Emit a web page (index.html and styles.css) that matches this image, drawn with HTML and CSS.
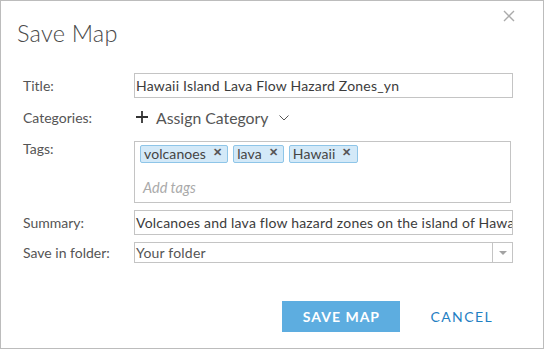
FILE: index.html
```html
<!DOCTYPE html>
<html>
<head>
<meta charset="utf-8">
<link rel="stylesheet" href="styles.css">
</head>
<body>
<div class="dialog">
  <div class="header">
    <h1 class="title">Save Map</h1>
    <button class="close" aria-label="Close">
      <svg width="12" height="12" viewBox="0 0 12 12"><path d="M1 1L11 11M11 1L1 11" stroke="#ababab" stroke-width="1.4" fill="none"/></svg>
    </button>
  </div>
  <div class="form">
    <div class="row r-title">
      <label class="label">Title:</label>
      <div class="input">Hawaii Island Lava Flow Hazard Zones_yn</div>
    </div>
    <div class="row r-cat">
      <label class="label">Categories:</label>
      <div class="assign">
        <svg class="plus" width="12" height="12" viewBox="0 0 12 12"><path d="M6 0V12M0 6H12" stroke="#333" stroke-width="1.8"/></svg>
        <span class="assign-text">Assign Category</span>
        <svg class="chev" width="10" height="6" viewBox="0 0 10 6"><path d="M0.5 0.5L5 5L9.5 0.5" stroke="#555" stroke-width="1" fill="none"/></svg>
      </div>
    </div>
    <div class="row r-tags">
      <label class="label label-top">Tags:</label>
      <div class="tags">
        <div class="chips">
          <span class="chip">volcanoes<span class="x">✕</span></span>
          <span class="chip">lava<span class="x">✕</span></span>
          <span class="chip">Hawaii<span class="x">✕</span></span>
        </div>
        <div class="placeholder">Add tags</div>
      </div>
    </div>
    <div class="row r-sum">
      <label class="label">Summary:</label>
      <div class="input clip">Volcanoes and lava flow hazard zones on the island of Hawaii</div>
    </div>
    <div class="row r-folder">
      <label class="label">Save in folder:</label>
      <div class="select">
        <span class="select-text">Your folder</span>
        <span class="select-btn"><span class="tri"></span></span>
      </div>
    </div>
  </div>
  <div class="footer">
    <button class="btn-primary">SAVE MAP</button>
    <button class="btn-link">CANCEL</button>
  </div>
</div>
</body>
</html>
```

FILE: styles.css
```css
* { box-sizing: border-box; }
html, body { margin: 0; padding: 0; background: #fff; }
body { font-family: Lato, "Open Sans", "Liberation Sans", sans-serif; color: #555; }

.dialog {
  width: 544px;
  height: 349px;
  border: 1px solid #bcbcbc;
  background: #fff;
  display: flex;
  flex-direction: column;
}

.header {
  position: relative;
  height: 72px;
  padding: 17px 0 0 16px;
}
.title {
  margin: 0;
  font-size: 23.5px;
  font-weight: 300;
  line-height: 30px;
  color: #4a4a4a;
  letter-spacing: 0.2px;
}
.close {
  position: absolute;
  top: 8px;
  right: 27px;
  width: 14px;
  height: 14px;
  padding: 1px;
  border: 0;
  background: none;
}

.form {
  display: flex;
  flex-direction: column;
  padding: 0 30px 0 22px;
}
.row {
  display: grid;
  grid-template-columns: 111px 1fr;
  align-items: center;
  font-size: 14px;
}
.label { color: #555; }
.label-top { align-self: start; padding-top: 0px; line-height: 16px; }

.r-title { height: 25px; }
.r-cat { height: 24px; margin-top: 7px; }
.r-tags { height: 62px; margin-top: 12px; align-items: start; }
.r-sum { height: 25px; margin-top: 7px; }
.r-folder { height: 21px; margin-top: 7px; }

.input {
  height: 25px;
  border: 1px solid #c4c4c4;
  padding: 0 0 0 1px;
  line-height: 23px;
  color: #3c3c3c;
  white-space: nowrap;
  overflow: hidden;
  letter-spacing: 0.2px;
}

.assign {
  display: flex;
  align-items: center;
  padding-left: 2px;
  color: #555;
}
.plus { margin-right: 8px; }
.assign-text { font-size: 15.8px; }
.chev { margin-left: 11px; margin-top: 1px; }

.tags {
  height: 62px;
  width: 377px;
  border: 1px solid #c4c4c4;
  padding: 3px 5px 0 5px;
}
.chips { display: flex; gap: 5px; }
.chip {
  display: inline-flex;
  align-items: center;
  height: 18px;
  padding: 0 5px 0 3px;
  background: #d3e9f8;
  border: 1px solid #8ec5e8;
  border-radius: 2px;
  color: #444;
  font-size: 14px;
  line-height: 16px;
  letter-spacing: 0.1px;
}
.x {
  margin-left: 7px;
  font-size: 10.5px;
  font-weight: 900;
  color: #555;
  position: relative;
  top: -2px;
}
.placeholder {
  margin-top: 16px;
  padding-left: 3px;
  font-style: italic;
  color: #aaa;
  font-size: 14.5px;
}

.select {
  height: 21px;
  border: 1px solid #c4c4c4;
  display: flex;
  align-items: center;
  color: #555;
}
.select-text { flex: 1; padding-left: 1px; line-height: 19px; letter-spacing: 0.2px; }
.select-btn {
  width: 20px;
  height: 19px;
  border-left: 1px solid #c4c4c4;
  display: flex;
  align-items: center;
  justify-content: center;
}
.tri {
  width: 0; height: 0;
  border-left: 4px solid transparent;
  border-right: 4px solid transparent;
  border-top: 4px solid #a3a3a3;
}

.footer {
  display: flex;
  justify-content: flex-end;
  align-items: center;
  padding: 38px 50px 0 0;
}
.btn-primary {
  width: 118px;
  height: 31px;
  border: 0;
  background: #5dade0;
  color: #fff;
  font-family: Lato, "Open Sans", sans-serif;
  font-size: 14px;
  font-weight: 700;
  letter-spacing: 1px;
}
.btn-link {
  margin-left: 30px;
  border: 0;
  background: none;
  padding: 0;
  color: #1f80c3;
  font-family: Lato, "Open Sans", sans-serif;
  font-size: 14px;
  font-weight: 400;
  letter-spacing: 1.4px;
}
```
